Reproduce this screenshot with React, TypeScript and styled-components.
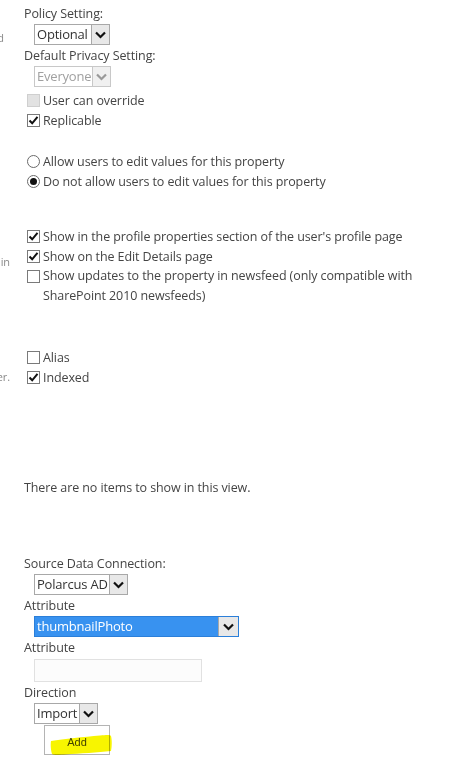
import React from "react";
import styled, { createGlobalStyle } from "styled-components";

const Global = createGlobalStyle`
  html, body { margin: 0; padding: 0; background: #fff; }
  body { font-family: "Open Sans", "Noto Sans", Arial, sans-serif; color: #444; }
`;

const Page = styled.div`
  width: 473px;
  height: 775px;
  overflow: hidden;
  display: flex;
  flex-direction: column;
  font-size: 12.5px;
  letter-spacing: -0.1px;
`;

const Section = styled.div<{ $height?: number }>`
  display: grid;
  grid-template-columns: 24px 1fr;
  height: ${(p) => (p.$height ? `${p.$height}px` : "auto")};
  flex: none;
`;

const Note = styled.div<{ $offset: number; $edge?: number }>`
  overflow: hidden;
  display: flex;
  justify-content: flex-end;
  align-items: flex-start;
  white-space: nowrap;
  padding-right: ${(p) => p.$edge ?? 14}px;
  padding-top: ${(p) => p.$offset}px;
  height: 20px;
  font-size: 11px;
  line-height: 20px;
  color: #8a8a8a;
`;

const Body = styled.div<{ $top?: number }>`
  display: flex;
  flex-direction: column;
  align-items: flex-start;
  padding-top: ${(p) => p.$top ?? 0}px;
`;

const Label = styled.div`
  line-height: 21px;
  height: 21px;
  white-space: nowrap;
`;

const Indented = styled.div<{ $bottom?: number }>`
  padding-left: 10px;
  padding-bottom: ${(p) => p.$bottom ?? 0}px;
  display: flex;
  flex-direction: column;
  align-items: flex-start;
`;

const SelectBox = styled.div<{ $width: number; $disabled?: boolean; $selected?: boolean }>`
  box-sizing: border-box;
  width: ${(p) => p.$width}px;
  height: 21px;
  border: 1px solid ${(p) => (p.$disabled ? "#c8c8c8" : p.$selected ? "#2b7fd9" : "#a8a8a8")};
  display: flex;
  align-items: stretch;
  background: ${(p) => (p.$selected ? "#3892f0" : "#fff")};
  color: ${(p) => (p.$disabled ? "#a0a0a0" : p.$selected ? "#fff" : "#333")};
  font-size: 13px;
  letter-spacing: -0.2px;
  line-height: 19px;
`;

const SelectText = styled.div`
  flex: 1;
  padding-left: 2px;
  white-space: nowrap;
  overflow: hidden;
`;

const SelectArrow = styled.div<{ $disabled?: boolean; $wide?: boolean }>`
  width: ${(p) => (p.$wide ? 19 : 17)}px;
  border-left: 1px solid ${(p) => (p.$disabled ? "#c8c8c8" : "#a8a8a8")};
  background: ${(p) => (p.$disabled ? "#f0f0f0" : "#e8e8e8")};
  display: flex;
  align-items: center;
  justify-content: center;
`;

const Chevron = ({ color }: { color: string }) => (
  <svg width="11" height="8" viewBox="0 0 11 8">
    <polyline points="1,1.5 5.5,6 10,1.5" fill="none" stroke={color} strokeWidth="2.2" />
  </svg>
);

const Select = ({
  value,
  width,
  disabled,
  selected,
}: {
  value: string;
  width: number;
  disabled?: boolean;
  selected?: boolean;
}) => (
  <SelectBox $width={width} $disabled={disabled} $selected={selected}>
    <SelectText>{value}</SelectText>
    <SelectArrow $disabled={disabled} $wide={selected}>
      <Chevron color={disabled ? "#999" : "#111"} />
    </SelectArrow>
  </SelectBox>
);

const OptionRow = styled.div`
  display: flex;
  align-items: center;
  height: 20px;
  padding-left: 3px;
  gap: 3px;
  white-space: nowrap;
`;

const WrapRow = styled.div`
  display: grid;
  grid-template-columns: 16px auto;
  padding-left: 3px;
  line-height: 20px;
  width: 400px;
`;

const Box = styled.span<{ $disabled?: boolean }>`
  box-sizing: border-box;
  width: 13px;
  height: 13px;
  border: 1px solid ${(p) => (p.$disabled ? "#cfcfcf" : "#7a7a7a")};
  background: ${(p) => (p.$disabled ? "#e2e2e2" : "#fff")};
  display: inline-flex;
  align-items: center;
  justify-content: center;
  flex: none;
`;

const BoxCell = styled.div`
  height: 20px;
  display: flex;
  align-items: center;
`;

const Tick = () => (
  <svg width="11" height="11" viewBox="0 0 11 11">
    <polyline points="1.5,5.5 4.2,8.3 9.5,1.8" fill="none" stroke="#111" strokeWidth="2" />
  </svg>
);

const Check = ({ checked, disabled }: { checked?: boolean; disabled?: boolean }) => (
  <Box $disabled={disabled}>{checked ? <Tick /> : null}</Box>
);

const RadioCircle = styled.span`
  box-sizing: border-box;
  width: 13px;
  height: 13px;
  border-radius: 50%;
  border: 1px solid #6a6a6a;
  background: #fff;
  display: inline-flex;
  align-items: center;
  justify-content: center;
  flex: none;
`;

const Dot = styled.span`
  width: 7px;
  height: 7px;
  border-radius: 50%;
  background: #111;
`;

const Radio = ({ checked }: { checked?: boolean }) => (
  <RadioCircle>{checked ? <Dot /> : null}</RadioCircle>
);

const TextInput = styled.div`
  box-sizing: border-box;
  width: 168px;
  height: 23px;
  margin-top: 1px;
  border: 1px solid #e1e1e1;
  background: #fcfcfc;
`;

const AddWrap = styled.div`
  position: relative;
  margin-left: 10px;
  margin-top: 1px;
`;

const AddButton = styled.div`
  box-sizing: border-box;
  width: 66px;
  height: 30px;
  border: 1px solid #b4b4b4;
  background: #fff;
  font-family: "Liberation Sans", Arial, sans-serif;
  font-size: 11px;
  color: #444;
  display: flex;
  align-items: center;
  justify-content: center;
  padding-top: 3px;
  letter-spacing: 0;
`;

const Highlight = styled.svg`
  position: absolute;
  left: 6px;
  top: 9px;
  mix-blend-mode: multiply;
  pointer-events: none;
`;

export default function App() {
  return (
    <Page>
      <Global />
      <Section $height={151}>
        <Note $offset={28} $edge={20}>rd</Note>
        <Body $top={3}>
          <Label>Policy Setting:</Label>
          <Indented>
            <Select value="Optional" width={76} />
          </Indented>
          <Label>Default Privacy Setting:</Label>
          <Indented $bottom={3}>
            <Select value="Everyone" width={77} disabled />
          </Indented>
          <OptionRow>
            <Check disabled />
            <span>User can override</span>
          </OptionRow>
          <OptionRow>
            <Check checked />
            <span>Replicable</span>
          </OptionRow>
        </Body>
      </Section>
      <Section $height={75}>
        <Note $offset={0}></Note>
        <Body>
          <OptionRow>
            <Radio />
            <span>Allow users to edit values for this property</span>
          </OptionRow>
          <OptionRow>
            <Radio checked />
            <span>Do not allow users to edit values for this property</span>
          </OptionRow>
        </Body>
      </Section>
      <Section $height={121}>
        <Note $offset={26}>is shown in</Note>
        <Body>
          <OptionRow>
            <Check checked />
            <span>Show in the profile properties section of the user's profile page</span>
          </OptionRow>
          <OptionRow>
            <Check checked />
            <span>Show on the Edit Details page</span>
          </OptionRow>
          <WrapRow>
            <BoxCell>
              <Check />
            </BoxCell>
            <span>
              Show updates to the property in newsfeed (only compatible with SharePoint 2010 newsfeeds)
            </span>
          </WrapRow>
        </Body>
      </Section>
      <Section $height={130}>
        <Note $offset={20}>number.</Note>
        <Body>
          <OptionRow>
            <Check />
            <span>Alias</span>
          </OptionRow>
          <OptionRow>
            <Check checked />
            <span>Indexed</span>
          </OptionRow>
        </Body>
      </Section>
      <Section $height={76}>
        <Note $offset={0}></Note>
        <Body>
          <Label>There are no items to show in this view.</Label>
        </Body>
      </Section>
      <Section>
        <Note $offset={0}></Note>
        <Body>
          <Label>Source Data Connection:</Label>
          <Indented>
            <Select value="Polarcus AD" width={94} />
          </Indented>
          <Label>Attribute</Label>
          <Indented>
            <Select value="thumbnailPhoto" width={205} selected />
          </Indented>
          <Label>Attribute</Label>
          <Indented>
            <TextInput />
          </Indented>
          <Label>Direction</Label>
          <Indented>
            <Select value="Import" width={64} />
            <AddWrap>
              <AddButton>Add</AddButton>
              <Highlight width="62" height="22" viewBox="0 0 62 22">
                <path
                  d="M1 7 C14 5 34 3 50 1.5 C56 1 60 0.5 61 2 C62 6 62 12 61 17 C48 18.5 30 19.5 16 20.5 C9 21 4 21.5 2 20 C0.5 15 0.5 10 1 7 Z"
                  fill="#f8f500"
                />
              </Highlight>
            </AddWrap>
          </Indented>
        </Body>
      </Section>
    </Page>
  );
}
